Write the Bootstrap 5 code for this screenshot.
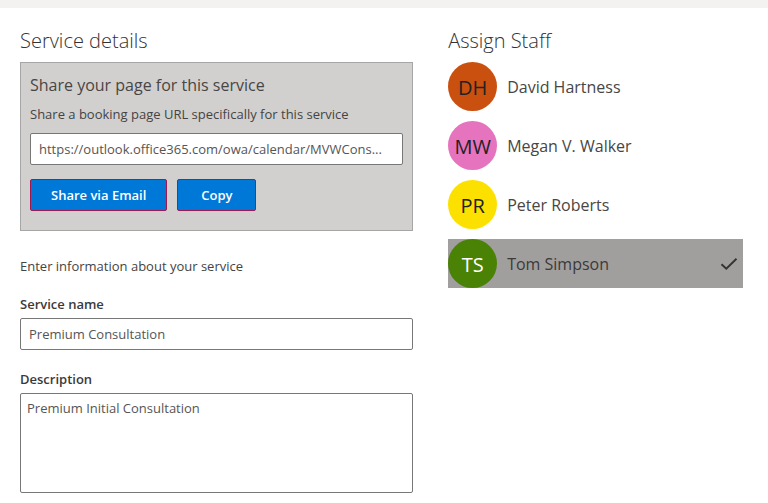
<!DOCTYPE html>
<html lang="en">
<head>
<meta charset="utf-8">
<meta name="viewport" content="width=device-width, initial-scale=1">
<title>Service details</title>
<link href="https://cdn.jsdelivr.net/npm/bootstrap@5.3.0/dist/css/bootstrap.min.css" rel="stylesheet">
<style>
  body { font-family: "Open Sans", "Noto Sans", sans-serif; font-size: 13px; line-height: 20px; color: #444; }
  .top-strip { height: 8px; background: #f3f2f1; }
  .editor { display: grid; grid-template-columns: minmax(0, 4fr) minmax(0, 3fr); column-gap: 35px; padding: 19px 25px 10px 20px; }
  .pane-title { font-size: 20px; line-height: 28px; font-weight: 350; margin-bottom: 7px; color: #333; }
  .share-box { background: #d2d0ce; border: 1px solid #a6a6a6; padding: 10px 9px 19px; margin-bottom: 25px; }
  .share-title { font-size: 16px; line-height: 24px; font-weight: 400; margin-bottom: 7px; color: #484644; }
  .share-label { margin-bottom: 9px; }
  .share-actions { gap: 10px; margin-top: 14px; }
  .intro { margin-bottom: 18px; }
  .field { margin-bottom: 19px; }
  .editor .form-control { font-size: 13px; line-height: 20px; color: #555; background: #fff; border: 1px solid #777; border-radius: 2px; padding: 5px 8px; }
  .editor textarea.form-control { min-height: 100px; padding: 4px 6px; resize: none; }
  .editor .form-label { font-weight: 600; margin-bottom: 4px; color: #3b3a39; }
  .btn-share { --bs-btn-color: #fff; --bs-btn-bg: #0078d7; --bs-btn-border-color: #a01850; --bs-btn-hover-color: #fff; --bs-btn-hover-bg: #106ebe; --bs-btn-hover-border-color: #a01850; --bs-btn-font-size: 13px; --bs-btn-line-height: 20px; --bs-btn-font-weight: 600; --bs-btn-border-radius: 2px; --bs-btn-padding-y: 5px; --bs-btn-padding-x: 20px; min-width: 79px; }
  .staff-list { display: grid; row-gap: 10px; }
  .staff { gap: 10px; font-size: 16px; line-height: 24px; color: #484644; background: transparent; padding: 0 5px 0 0; }
  .staff[aria-pressed="true"] { background: #a19f9d; color: #3b3a39; }
  .avatar { width: 49px; height: 49px; padding-top: 2px; font-size: 20px; color: #222; }
  .avatar-orange { background: #ca5010; }
  .avatar-pink { background: #e673bd; }
  .avatar-yellow { background: #fce100; }
  .avatar-green { background: #498205; color: #fff; }
</style>
<script src="https://cdn.jsdelivr.net/npm/bootstrap@5.3.0/dist/js/bootstrap.bundle.min.js"></script>
</head>
<body>
<div class="top-strip"></div>
<main class="editor">
  <section>
    <h1 class="pane-title">Service details</h1>
    <div class="share-box">
      <h2 class="share-title">Share your page for this service</h2>
      <label class="share-label d-block" for="url">Share a booking page URL specifically for this service</label>
      <input class="form-control" id="url" type="text" readonly value="https://outlook.office365.com/owa/calendar/MVWCons...">
      <div class="share-actions d-flex">
        <button type="button" class="btn btn-share">Share via Email</button>
        <button type="button" class="btn btn-share">Copy</button>
      </div>
    </div>
    <p class="intro">Enter information about your service</p>
    <div class="field">
      <label class="form-label d-block" for="name">Service name</label>
      <input class="form-control" id="name" type="text" value="Premium Consultation">
    </div>
    <div>
      <label class="form-label d-block" for="desc">Description</label>
      <textarea class="form-control d-block" id="desc">Premium Initial Consultation</textarea>
    </div>
  </section>
  <section>
    <h1 class="pane-title">Assign Staff</h1>
    <div class="staff-list">
      <button type="button" class="staff border-0 d-flex align-items-center text-start" aria-pressed="false">
        <span class="avatar avatar-orange rounded-circle d-flex align-items-center justify-content-center flex-shrink-0">DH</span>
        <span>David Hartness</span>
      </button>
      <button type="button" class="staff border-0 d-flex align-items-center text-start" aria-pressed="false">
        <span class="avatar avatar-pink rounded-circle d-flex align-items-center justify-content-center flex-shrink-0">MW</span>
        <span>Megan V. Walker</span>
      </button>
      <button type="button" class="staff border-0 d-flex align-items-center text-start" aria-pressed="false">
        <span class="avatar avatar-yellow rounded-circle d-flex align-items-center justify-content-center flex-shrink-0">PR</span>
        <span>Peter Roberts</span>
      </button>
      <button type="button" class="staff border-0 d-flex align-items-center text-start" aria-pressed="true">
        <span class="avatar avatar-green rounded-circle d-flex align-items-center justify-content-center flex-shrink-0">TS</span>
        <span>Tom Simpson</span>
        <svg class="ms-auto" width="18" height="14" viewBox="0 0 18 14" fill="none" stroke="#333" stroke-width="1.9" aria-hidden="true"><path d="M1.500 7.200l4.800 4.600L16.500 1.800"/></svg>
      </button>
    </div>
  </section>
</main>
</body>
</html>
